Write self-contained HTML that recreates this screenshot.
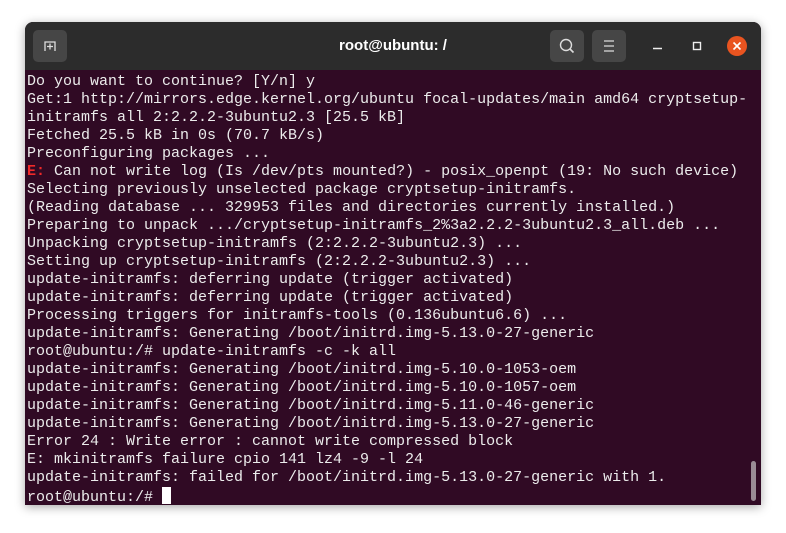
<!DOCTYPE html>
<html><head><meta charset="utf-8"><style>
html,body{margin:0;padding:0;background:#fff;width:786px;height:533px;overflow:hidden}
.win{position:absolute;left:25px;top:22px;width:736px;height:483px;border-radius:8px 8px 0 0;background:#300a24;box-shadow:0 2px 10px rgba(0,0,0,.35);overflow:hidden}
.tb{position:absolute;left:0;top:0;width:736px;height:48px;background:#2c2c2c;color:#fff;font:bold 15px "Liberation Sans",sans-serif}
.btn{position:absolute;top:8px;width:34px;height:32px;background:#464646;border-radius:5px}
.title{position:absolute;left:0;right:0;top:15px;text-align:center}
pre{position:absolute;left:2px;top:51px;margin:0;font:15px/18px "Liberation Mono","DejaVu Sans Mono",monospace;color:#ececec;white-space:pre}
.r{color:#ef2929;font-weight:bold}
.cur{display:inline-block;width:9px;height:17px;background:#fff;vertical-align:-3px}
.sb{position:absolute;left:726px;top:439px;width:5px;height:40px;background:#9a8b95;border-radius:3px}
</style></head><body>
<div class="win">
<div class="tb">
<div class="btn" style="left:8px"><svg width="34" height="32"><path d="M12 21V12h10v9M14 16.5h6M17 13.5v6" stroke="#ddd" stroke-width="1.3" fill="none"/></svg></div>
<div class="title">root@ubuntu: /</div>
<div class="btn" style="left:525px"><svg width="34" height="32"><circle cx="16" cy="15" r="5.5" stroke="#ddd" stroke-width="1.4" fill="none"/><path d="M20 19l3.5 3.5" stroke="#ddd" stroke-width="1.6"/></svg></div>
<div class="btn" style="left:567px"><svg width="34" height="32"><path d="M12 11h10M12 16h10M12 21h10" stroke="#ddd" stroke-width="1.3"/></svg></div>
<svg style="position:absolute;left:620px;top:14px" width="116" height="24"><path d="M8 12.5h9" stroke="#eee" stroke-width="1.6"/><rect x="48.5" y="6.5" width="7" height="7" stroke="#eee" stroke-width="1.4" fill="none"/><circle cx="92" cy="10" r="10" fill="#e95420"/><path d="M88.5 6.5l7 7M95.5 6.5l-7 7" stroke="#fff" stroke-width="1.6"/></svg>
</div>
<pre>Do you want to continue? [Y/n] y
Get:1 http://mirrors.edge.kernel.org/ubuntu focal-updates/main amd64 cryptsetup-
initramfs all 2:2.2.2-3ubuntu2.3 [25.5 kB]
Fetched 25.5 kB in 0s (70.7 kB/s)
Preconfiguring packages ...
<span class="r">E: </span>Can not write log (Is /dev/pts mounted?) - posix_openpt (19: No such device)
Selecting previously unselected package cryptsetup-initramfs.
(Reading database ... 329953 files and directories currently installed.)
Preparing to unpack .../cryptsetup-initramfs_2%3a2.2.2-3ubuntu2.3_all.deb ...
Unpacking cryptsetup-initramfs (2:2.2.2-3ubuntu2.3) ...
Setting up cryptsetup-initramfs (2:2.2.2-3ubuntu2.3) ...
update-initramfs: deferring update (trigger activated)
update-initramfs: deferring update (trigger activated)
Processing triggers for initramfs-tools (0.136ubuntu6.6) ...
update-initramfs: Generating /boot/initrd.img-5.13.0-27-generic
root@ubuntu:/# update-initramfs -c -k all
update-initramfs: Generating /boot/initrd.img-5.10.0-1053-oem
update-initramfs: Generating /boot/initrd.img-5.10.0-1057-oem
update-initramfs: Generating /boot/initrd.img-5.11.0-46-generic
update-initramfs: Generating /boot/initrd.img-5.13.0-27-generic
Error 24 : Write error : cannot write compressed block
E: mkinitramfs failure cpio 141 lz4 -9 -l 24
update-initramfs: failed for /boot/initrd.img-5.13.0-27-generic with 1.
root@ubuntu:/# <span class="cur"></span></pre>
<div class="sb"></div>
</div>
</body></html>
